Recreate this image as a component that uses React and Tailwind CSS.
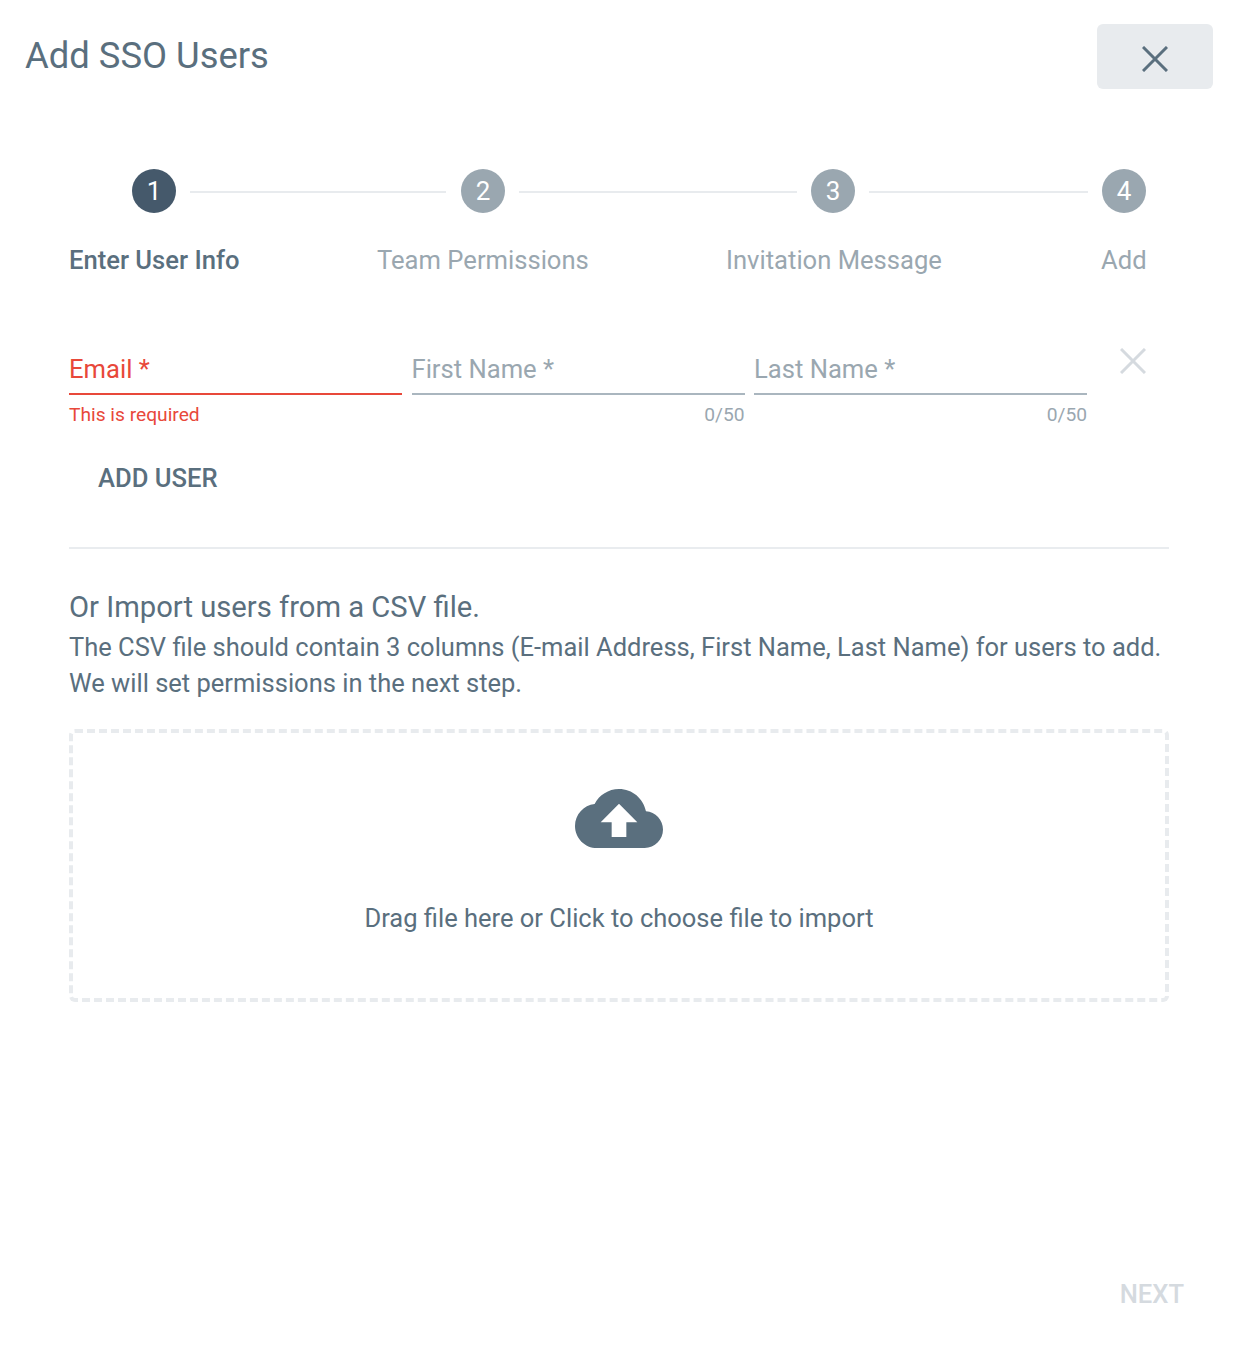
const steps = [
  { n: 1, label: 'Enter User Info', active: true },
  { n: 2, label: 'Team Permissions' },
  { n: 3, label: 'Invitation Message' },
  { n: 4, label: 'Add' },
]

function StepCircle({ n, active }) {
  return (
    <div className={`w-11 h-11 shrink-0 rounded-full flex items-center justify-center text-white text-[26px] ${active ? 'bg-[#45596b]' : 'bg-[#9aa7b0]'}`}>
      {n}
    </div>
  )
}

function CloseIcon({ className }) {
  return (
    <svg className={className} viewBox="0 0 26 26" fill="none" stroke="currentColor" strokeWidth="3">
      <path d="M1 1l24 24M25 1L1 25" />
    </svg>
  )
}

function Field({ label, counter, error }) {
  return (
    <div className="w-[333px] shrink-0">
      <div className={`h-[50px] border-b-2 flex items-center text-[25.6px] ${error ? 'border-[#e8483a] text-[#e8483a]' : 'border-[#aab6bf] text-[#9aa7b0]'}`}>
        {label}
      </div>
      <div className={`h-7 mt-[6px] flex items-center text-[19.2px] ${error ? 'text-[#e8483a]' : 'justify-end text-[#9aa7b0]'}`}>
        {error || counter}
      </div>
    </div>
  )
}

export default function App() {
  return (
    <div className="w-[1235px] h-[1353px] bg-white flex flex-col text-[#5a6f7e] font-['Roboto',sans-serif]">
      {/* Header */}
      <div className="flex justify-between pl-[25px] pr-[22px] pt-6">
        <h1 className="text-[36.4px] leading-[64px] font-normal">Add SSO Users</h1>
        <button className="w-[116px] h-[65px] bg-[#e8ebee] rounded-md flex items-center justify-center">
          <CloseIcon className="w-[26px] h-[26px] mt-[5px] text-[#5a6f7e]" />
        </button>
      </div>

      <div className="mx-[69px] w-[1100px] flex flex-col flex-1">
        {/* Stepper */}
        <div className="flex items-center mt-20 pl-[63px]">
          <StepCircle n={1} active />
          <div className="h-[2px] w-[256px] mt-[2px] ml-[14px] mr-[15px] bg-[#e8ebee]" />
          <StepCircle n={2} />
          <div className="h-[2px] w-[278px] mt-[2px] mx-[14px] bg-[#e8ebee]" />
          <StepCircle n={3} />
          <div className="h-[2px] w-[219px] mt-[2px] mx-[14px] bg-[#e8ebee]" />
          <StepCircle n={4} />
        </div>
        <div className="flex mt-[26px] text-[25.6px] leading-[42px] text-[#9aa7b0]">
          <div className="w-[308px] font-medium text-[#5a6f7e]">{steps[0].label}</div>
          <div className="w-[349px]">{steps[1].label}</div>
          <div className="w-[375px]">{steps[2].label}</div>
          <div>{steps[3].label}</div>
        </div>

        {/* User row */}
        <div className="flex gap-[9.5px] mt-[64px]">
          <Field label="Email *" error="This is required" />
          <Field label="First Name *" counter="0/50" />
          <Field label="Last Name *" counter="0/50" />
          <CloseIcon className="w-[26px] h-[26px] ml-[23px] mt-[3px] text-[#d5dadf]" />
        </div>
        <button className="self-start ml-[29px] mt-[28px] text-[25.6px] leading-[42px] font-medium">ADD USER</button>

        <div className="h-[2px] bg-[#e9ecef] mt-[48px]" />

        {/* CSV import */}
        <div className="text-[29.2px] leading-[40px] mt-[38px]">Or Import users from a CSV file.</div>
        <p className="text-[25.5px] leading-[36px] mt-[2px]">
          The CSV file should contain 3 columns (E-mail Address, First Name, Last Name) for users to add.
          <br />
          We will set permissions in the next step.
        </p>
        <div className="h-[273px] mt-[28px] border-4 border-dashed border-[#e8ebee] rounded-md flex flex-col items-center">
          <svg className="w-[88px] h-[59px] mt-[56px] text-[#5a6f7e]" viewBox="0 4 24 16" fill="currentColor" preserveAspectRatio="none">
            <path d="M19.35 10.04C18.67 6.59 15.64 4 12 4 9.11 4 6.6 5.64 5.35 8.04 2.34 8.36 0 10.91 0 14c0 3.31 2.69 6 6 6h13c2.76 0 5-2.24 5-5 0-2.64-2.05-4.78-4.65-4.96zM14 13v4h-4v-4H7l5-5 5 5h-3z" />
          </svg>
          <div className="text-[25.5px] leading-[36px] mt-[52px]">Drag file here or Click to choose file to import</div>
        </div>

        <div className="mt-auto mb-[38px] -mr-[15px] flex justify-end">
          <button className="text-[25.6px] leading-[42px] font-medium text-[#d5dadf]">NEXT</button>
        </div>
      </div>
    </div>
  )
}
